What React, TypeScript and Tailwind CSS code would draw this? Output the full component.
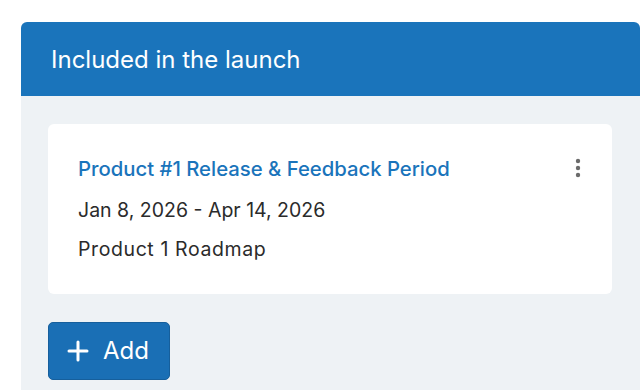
import React from 'react';

export default function App() {
    return (
        <div className="w-[640px] h-[390px] bg-white pt-[22px] pl-[21px] overflow-hidden" style={{ fontFamily: 'Inter, "Open Sans", sans-serif' }}>
            <div className="h-full flex flex-col rounded-t-[6px] overflow-hidden">
                {/* Header */}
                <div className="h-[74px] shrink-0 bg-[#1a74bb] flex items-center pl-[30px] pt-[2px]">
                    <h2 className="text-[24px] text-white">Included in the launch</h2>
                </div>

                {/* Body */}
                <div className="flex-1 bg-[#eef2f5] pt-[28px] pl-[27px] pr-[28px]">
                    <div className="bg-white rounded-[6px] h-[170px] pl-[30px] pr-[24px] pt-[32px] flex justify-between">
                        <div className="flex flex-col">
                            <span className="text-[20.3px] font-medium text-[#1a74bb] leading-[26px]">
                                Product #1 Release &amp; Feedback Period
                            </span>
                            <span className="text-[19.5px] text-[#2b2b2b] leading-[26px] mt-[15px]">
                                Jan 8, 2026 - Apr 14, 2026
                            </span>
                            <span className="text-[19.5px] text-[#2b2b2b] leading-[26px] mt-[13px] tracking-[0.6px]">
                                Product 1 Roadmap
                            </span>
                        </div>
                        <svg width="20" height="24" viewBox="0 0 20 24" className="mt-[0px] fill-[#6b6b6b]">
                            <circle cx="10" cy="5" r="2.2" />
                            <circle cx="10" cy="12" r="2.2" />
                            <circle cx="10" cy="19" r="2.2" />
                        </svg>
                    </div>

                    <button className="mt-[28px] w-[122px] h-[58px] rounded-[5px] bg-[#1a6fb5] border border-[#165f9c] flex items-center pl-[18px] text-white">
                        <svg width="22" height="22" viewBox="0 0 22 22" className="stroke-white" strokeWidth="3" strokeLinecap="round">
                            <path d="M11 2v18M2 11h18" />
                        </svg>
                        <span className="text-[24px] ml-[14px]">Add</span>
                    </button>
                </div>
            </div>
        </div>
    );
}
